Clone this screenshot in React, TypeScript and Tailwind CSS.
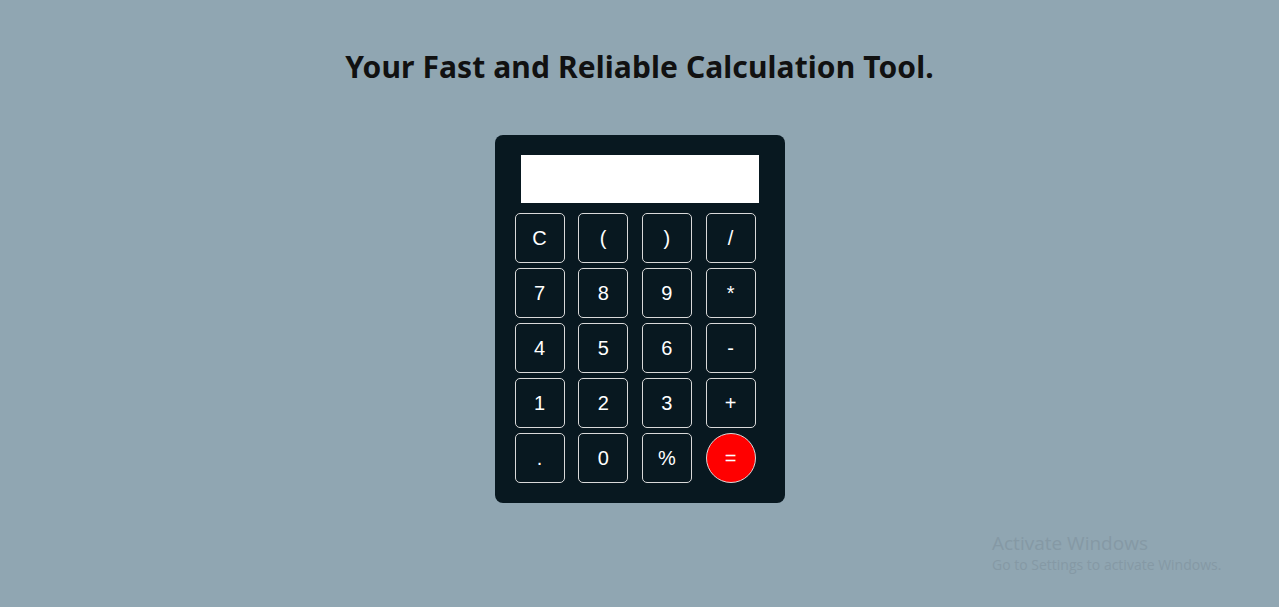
import React, { useState } from "react";

const keys: string[][] = [
  ["C", "(", ")", "/"],
  ["7", "8", "9", "*"],
  ["4", "5", "6", "-"],
  ["1", "2", "3", "+"],
  [".", "0", "%", "="],
];

const App: React.FC = () => {
  const [value, setValue] = useState("");

  const handleClick = (k: string) => {
    if (k === "C") {
      setValue("");
    } else if (k === "=") {
      try {
        // eslint-disable-next-line no-new-func
        setValue(String(Function(`return (${value})`)()));
      } catch (er) {
        setValue("Error");
      }
    } else {
      setValue(value + k);
    }
  };

  return (
    <div className="relative min-h-[607px] w-full bg-[#90a6b2] overflow-hidden">
      <h1
        className="pt-[47px] text-center text-[30px] leading-[40px] font-bold tracking-[0.1px] text-[#111]"
        style={{ fontFamily: '"Noto Sans", "DejaVu Sans", sans-serif' }}
      >
        Your Fast and Reliable Calculation Tool.
      </h1>

      <div className="mx-auto mt-[48px] w-[290px] rounded-lg bg-[#081820] pt-[20px] pb-[20px]">
        <input
          type="text"
          value={value}
          readOnly
          className="mx-[26px] block h-[48px] w-[238px] bg-white px-2 text-right text-2xl text-black outline-none"
        />
        <div className="mt-[10px] flex flex-col gap-[5px] pl-[20px]">
          {keys.map((row, i) => (
            <div key={i} className="flex gap-[13.7px]">
              {row.map((k) => (
                <button
                  key={k}
                  onClick={() => handleClick(k)}
                  className={`flex h-[50px] w-[50px] items-center justify-center border border-[#d9d9d9] text-[20px] text-white ${
                    k === "=" ? "rounded-full bg-[#ff0000]" : "rounded-[5px] bg-transparent"
                  }`}
                  style={{ fontFamily: '"Liberation Sans", Arial, sans-serif' }}
                >
                  {k}
                </button>
              ))}
            </div>
          ))}
        </div>
      </div>

      <div
        className="absolute left-[992px] top-[531px] text-[#8599a5]"
        style={{ fontFamily: '"Open Sans", "Noto Sans", sans-serif' }}
      >
        <p className="text-[19px] leading-[24px]">Activate Windows</p>
        <p className="text-[14px] leading-[19px]">Go to Settings to activate Windows.</p>
      </div>
    </div>
  );
};

export default App;
